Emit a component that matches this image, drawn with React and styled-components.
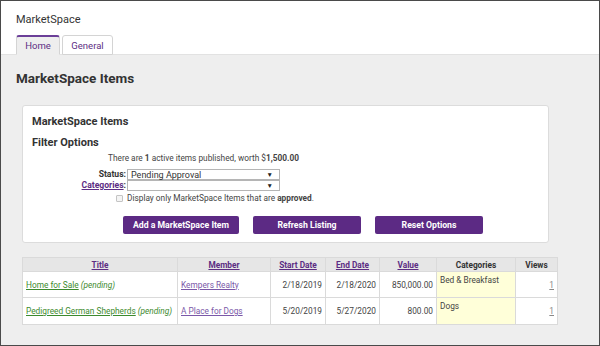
import React from "react";
import styled, { createGlobalStyle } from "styled-components";

const GlobalStyle = createGlobalStyle`
	html, body {
		margin: 0;
		padding: 0;
		background: #ffffff;
	}
	* {
		box-sizing: border-box;
	}
`;

const items = [
	{
		title: "Home for Sale",
		member: "Kempers Realty",
		start: "2/18/2019",
		end: "2/18/2020",
		value: "850,000.00",
		category: "Bed & Breakfast",
		views: 1,
	},
	{
		title: "Pedigreed German Shepherds",
		member: "A Place for Dogs",
		start: "5/20/2019",
		end: "5/27/2020",
		value: "800.00",
		category: "Dogs",
		views: 1,
	},
];

const columns = [
	{ label: "Title", width: 155, link: true },
	{ label: "Member", width: 93, link: true },
	{ label: "Start Date", width: 55, link: true },
	{ label: "End Date", width: 54, link: true },
	{ label: "Value", width: 57, link: true },
	{ label: "Categories", width: 79 },
	{ label: "Views", width: 42 },
];

function App() {
	return (
		<>
			<GlobalStyle />
			<Frame>
				<Header>
					<SiteName>MarketSpace</SiteName>
					<Tabs>
						<Tab $active>Home</Tab>
						<Tab>General</Tab>
					</Tabs>
				</Header>
				<Main>
					<PageTitle>MarketSpace Items</PageTitle>
					<Card>
						<CardTitle>MarketSpace Items</CardTitle>
						<SectionTitle>Filter Options</SectionTitle>
						<FilterGrid>
							<Summary>
								There are <b>1</b> active items published, worth $<b>1,500.00</b>
							</Summary>
							<Label>Status:</Label>
							<FakeSelect>
								<span>Pending Approval</span>
								<Arrow>▼</Arrow>
							</FakeSelect>
							<Label>
								<LabelLink>Categories</LabelLink>:
							</Label>
							<FakeSelect>
								<span />
								<Arrow>▼</Arrow>
							</FakeSelect>
							<CheckCell>
								<Check />
							</CheckCell>
							<CheckText>
								Display only MarketSpace Items that are <b>approved</b>.
							</CheckText>
						</FilterGrid>
						<Actions>
							<Button $w={116}>Add a MarketSpace Item</Button>
							<Button $w={108}>Refresh Listing</Button>
							<Button $w={108}>Reset Options</Button>
						</Actions>
					</Card>
					<Table>
						<colgroup>
							{columns.map((c) => (
								<col key={c.label} style={{ width: c.width }} />
							))}
						</colgroup>
						<thead>
							<tr>
								{columns.map((c) => (
									<Th key={c.label}>{c.link ? <HeadLink>{c.label}</HeadLink> : c.label}</Th>
								))}
							</tr>
						</thead>
						<tbody>
							{items.map((it, i) => (
								<Row key={it.title} $h={i === 0 ? 26 : 27}>
									<Td>
										<TitleLink>{it.title}</TitleLink> <Pending>(pending)</Pending>
									</Td>
									<Td>
										<MemberLink>{it.member}</MemberLink>
									</Td>
									<Td $right>{it.start}</Td>
									<Td $right>{it.end}</Td>
									<Td $right>{it.value}</Td>
									<CategoryCell>{it.category}</CategoryCell>
									<Td $right>
										<ViewsLink>{it.views}</ViewsLink>
									</Td>
								</Row>
							))}
						</tbody>
					</Table>
				</Main>
			</Frame>
		</>
	);
}

// * ====================== STYLES ======================
const Frame = styled.div`
	width: 600px;
	height: 346px;
	border: 1px solid #4a4a4a;
	background: #eeeeee;
	font-family: Roboto, "Liberation Sans", sans-serif;
	color: #333;
	overflow: hidden;
`;

const Header = styled.header`
	background: #ffffff;
	padding: 13px 15px 0;
	border-bottom: 1px solid #e2e2e2;
`;

const SiteName = styled.div`
	font-size: 11px;
	line-height: 12px;
	color: #333;
`;

const Tabs = styled.nav`
	display: flex;
	gap: 2px;
	margin-top: 9px;
	margin-bottom: -1px;
`;

const Tab = styled.div`
	height: 20px;
	width: ${(p) => (p.$active ? "44px" : "51px")};
	display: flex;
	align-items: center;
	justify-content: center;
	font-size: 9.5px;
	color: #5c2d83;
	background: ${(p) => (p.$active ? "#eeeeee" : "#ffffff")};
	border: 1px solid #d4d4d4;
	border-top: ${(p) => (p.$active ? "2px solid #6b3f98" : "1px solid #d4d4d4")};
	border-bottom: ${(p) => (p.$active ? "1px solid #eeeeee" : "1px solid #d4d4d4")};
	border-radius: 3px 3px 0 0;
`;

const Main = styled.main`
	padding: 0 15px;
`;

const PageTitle = styled.h1`
	margin: 15px 0 0;
	font-size: 13.5px;
	line-height: 16px;
	font-weight: 700;
	color: #333;
`;

const Card = styled.section`
	margin: 19px 0 0 6px;
	width: 527px;
	background: #ffffff;
	border: 1px solid #dcdcdc;
	border-radius: 3px;
	padding: 9px 9px 8px 9px;
`;

const CardTitle = styled.h2`
	margin: 0;
	font-size: 11px;
	line-height: 13px;
	font-weight: 700;
	color: #333;
`;

const SectionTitle = styled.h3`
	margin: 8px 0 0;
	font-size: 11px;
	line-height: 13px;
	font-weight: 700;
	color: #333;
`;

const FilterGrid = styled.div`
	display: grid;
	grid-template-columns: 95px 153px;
	row-gap: 0;
	margin-top: 4px;
	font-size: 8.3px;
	color: #444;
	align-items: center;
`;

const Summary = styled.div`
	grid-column: 1 / span 2;
	white-space: nowrap;
	line-height: 10px;
	padding-left: 76px;
	margin-bottom: 6px;
`;

const Label = styled.div`
	text-align: right;
	font-weight: 700;
	font-size: 8.6px;
	line-height: 11px;
	padding-right: 1px;
	color: #333;
`;

const LabelLink = styled.span`
	color: #5c2d83;
	text-decoration: underline;
`;

const FakeSelect = styled.div`
	height: 11px;
	border: 1px solid #b5b5b5;
	background: #ffffff;
	display: flex;
	align-items: center;
	justify-content: space-between;
	padding: 0 6px 0 3px;
	font-size: 9px;
	color: #333;
`;

const Arrow = styled.span`
	font-size: 6.5px;
	color: #222;
`;

const CheckCell = styled.div`
	display: flex;
	justify-content: flex-end;
	padding-right: 4px;
	margin-top: 2px;
`;

const Check = styled.span`
	width: 7px;
	height: 7px;
	border: 1px solid #c4c4c4;
	border-radius: 1px;
	background: #f4f4f4;
`;

const CheckText = styled.div`
	white-space: nowrap;
	line-height: 10px;
	margin-top: 2px;
`;

const Actions = styled.div`
	display: flex;
	gap: 14px;
	margin: 13px 0 0 91px;
`;

const Button = styled.button`
	width: ${(p) => p.$w}px;
	height: 18px;
	border: none;
	border-radius: 2px;
	background: #5c2a84;
	color: #ffffff;
	font-family: Roboto, "Liberation Sans", sans-serif;
	font-size: 8.7px;
	font-weight: 700;
	padding: 0;
`;

const Table = styled.table`
	margin: 14px 0 0 6px;
	width: 535px;
	table-layout: fixed;
	border-collapse: collapse;
	background: #ffffff;
	font-size: 8.3px;
	color: #444;
`;

const Th = styled.th`
	height: 14px;
	padding: 0 3px;
	background: #e6e6e6;
	border: 1px solid #dadada;
	font-weight: 700;
	text-align: center;
	color: #333;
`;

const HeadLink = styled.span`
	color: #5c2d83;
	text-decoration: underline;
`;

const Row = styled.tr`
	height: ${(p) => p.$h}px;
`;

const Td = styled.td`
	padding: 0 3px;
	border: 1px solid #dadada;
	text-align: ${(p) => (p.$right ? "right" : "left")};
	white-space: nowrap;
	overflow: hidden;
	vertical-align: middle;
`;

const CategoryCell = styled.td`
	padding: 3px 3px 0;
	border: 1px solid #dadada;
	background: #ffffd9;
	vertical-align: top;
	white-space: nowrap;
	color: #444;
`;

const TitleLink = styled.span`
	color: #3c8a2e;
	text-decoration: underline;
`;

const Pending = styled.i`
	color: #3c8a2e;
`;

const MemberLink = styled.span`
	color: #7a58a8;
	text-decoration: underline;
`;

const ViewsLink = styled.span`
	color: #888;
	text-decoration: underline;
`;

export default App;
